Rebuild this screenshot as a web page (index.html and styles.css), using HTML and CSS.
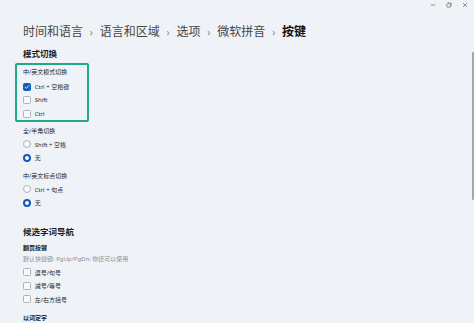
FILE: index.html
```html
<!DOCTYPE html>
<html lang="zh-CN">
<head>
<meta charset="utf-8">
<title>按键</title>
<link rel="stylesheet" href="styles.css">
</head>
<body>
<div class="window">
  <div class="titlebar">
    <span class="cap"><svg width="6" height="6" viewBox="0 0 6 6"><path d="M0.8 3H5.2" stroke="#666" stroke-width="0.7"/></svg></span>
    <span class="cap"><svg width="6" height="6" viewBox="0 0 6 6"><rect x="0.8" y="1.6" width="3.6" height="3.6" rx="0.6" fill="none" stroke="#666" stroke-width="0.7"/><path d="M1.8 0.8H4.6Q5.2 0.8 5.2 1.4V4.2" fill="none" stroke="#666" stroke-width="0.6"/></svg></span>
    <span class="cap"><svg width="6" height="6" viewBox="0 0 6 6"><path d="M1 1L5 5M5 1L1 5" stroke="#666" stroke-width="0.7"/></svg></span>
  </div>
  <div class="content">
    <nav class="crumbs">
      <span class="crumb">时间和语言</span><span class="sep">›</span><span class="crumb">语言和区域</span><span class="sep">›</span><span class="crumb">选项</span><span class="sep">›</span><span class="crumb">微软拼音</span><span class="sep">›</span><span class="crumb current">按键</span>
    </nav>

    <h2 class="section">模式切换</h2>
    <div class="highlight">
      <div class="label">中/英文模式切换</div>
      <div class="rows">
        <div class="opt"><span class="cb on"><svg width="6" height="6" viewBox="0 0 6 6"><path d="M1.1 3.1L2.4 4.4L4.9 1.6" fill="none" stroke="#fff" stroke-width="0.8" stroke-linecap="round" stroke-linejoin="round"/></svg></span>Ctrl + 空格键</div>
        <div class="opt"><span class="cb"></span>Shift</div>
        <div class="opt"><span class="cb"></span>Ctrl</div>
      </div>
    </div>

    <div class="label g-half">全/半角切换</div>
    <div class="rows">
      <div class="opt"><span class="rd"></span>Shift + 空格</div>
      <div class="opt"><span class="rd on"></span>无</div>
    </div>

    <div class="label g-punct">中/英文标点切换</div>
    <div class="rows">
      <div class="opt"><span class="rd"></span>Ctrl + 句点</div>
      <div class="opt"><span class="rd on"></span>无</div>
    </div>

    <h2 class="section s-cand">候选字词导航</h2>
    <div class="label strong g-page">翻页按键</div>
    <div class="desc">默认快捷键: PgUp/PgDn; 你还可以使用</div>
    <div class="rows">
      <div class="opt"><span class="cb"></span>逗号/句号</div>
      <div class="opt"><span class="cb"></span>减号/等号</div>
      <div class="opt"><span class="cb"></span>左/右方括号</div>
    </div>
    <div class="label strong g-word">以词定字</div>
  </div>
  <div class="scrollbar"></div>
</div>
</body>
</html>
```

FILE: styles.css
```css
html, body {
  margin: 0;
  padding: 0;
  background: #eff3f8;
}

.window {
  width: 474px;
  height: 323px;
  background: #eff3f8;
  overflow: hidden;
  position: relative;
  font-family: "Noto Sans", "Noto Sans CJK SC", sans-serif;
  color: #1c1c1c;
}

.titlebar {
  display: flex;
  justify-content: flex-end;
  height: 10px;
  padding-right: 1px;
}

.cap {
  width: 16px;
  display: flex;
  align-items: center;
  justify-content: center;
}

.content {
  padding-left: 23px;
}

.crumbs {
  margin-top: 14px;
  display: flex;
  align-items: center;
  height: 16px;
  font-size: 12px;
  line-height: 16px;
  white-space: nowrap;
}

.crumb {
  color: #454545;
}

.crumb.current {
  color: #111;
  font-weight: 700;
}

.sep {
  width: 16.75px;
  text-align: center;
  color: #858585;
  font-size: 10px;
}

.section {
  margin: 8px 0 0;
  font-size: 8.5px;
  line-height: 12px;
  height: 12px;
  font-weight: 600;
}

.highlight {
  margin: 3px 0 0 -8px;
  width: 74px;
  height: 59px;
  box-sizing: border-box;
  border: 2px solid #1fa98a;
  border-radius: 2px;
  padding: 2.3px 0 0 6px;
}

.highlight .rows {
  margin-top: 2.9px;
}

.label {
  font-size: 6px;
  line-height: 10px;
  height: 10px;
  white-space: nowrap;
}

.label.strong {
  font-weight: 700;
}

.rows {
  margin-top: 1.7px;
  display: flex;
  flex-direction: column;
}

.opt {
  height: 13.33px;
  display: flex;
  align-items: center;
  font-size: 6px;
  white-space: nowrap;
  color: #2a2a2a;
}

.cb, .rd {
  flex: none;
  width: 8px;
  height: 8px;
  box-sizing: border-box;
  margin-right: 3.7px;
  border: 1px solid #aeb2b8;
  background: #f7f9fb;
  display: flex;
  align-items: center;
  justify-content: center;
}

.cb {
  border-radius: 1.5px;
}

.cb.on {
  background: #0f5fc2;
  border-color: #0f5fc2;
}

.rd {
  border-radius: 50%;
}

.rd.on {
  border: 2.4px solid #1057bf;
  background: #ffffff;
}

.g-half {
  margin-top: 4px;
}

.g-punct {
  margin-top: 6.7px;
}

.s-cand {
  margin-top: 16.2px;
}

.g-page {
  margin-top: 5.2px;
}

.desc {
  margin-top: 1.3px;
  font-size: 6px;
  line-height: 10px;
  height: 10px;
  color: #8a8d91;
  white-space: nowrap;
}

.g-word {
  margin-top: 7.3px;
}

.scrollbar {
  position: absolute;
  right: 0;
  top: 52px;
  width: 2px;
  height: 148px;
  background: #a2a5a9;
  border-radius: 1px;
}
```
